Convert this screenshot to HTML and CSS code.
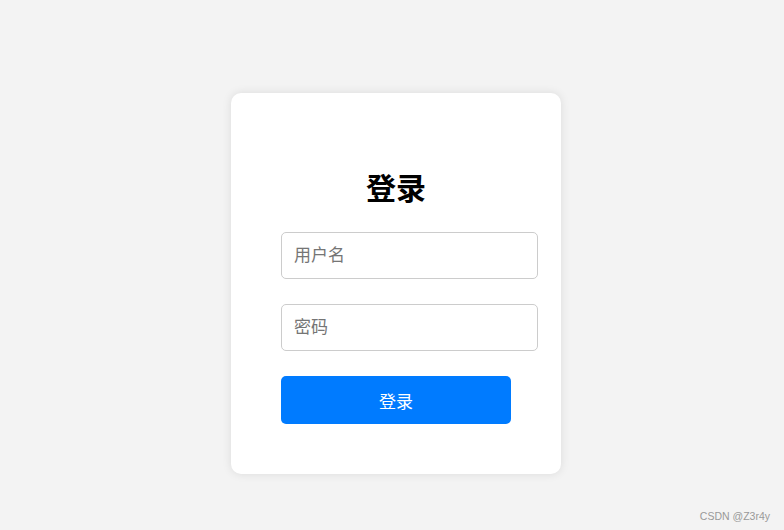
FILE: index.html
```html
<!DOCTYPE html>
<html lang="zh-CN">
<head>
<meta charset="utf-8">
<title>登录</title>
<link rel="stylesheet" href="styles.css">
</head>
<body>
<div class="page">
  <form class="card">
    <h1 class="title">登录</h1>
    <input class="field" type="text" placeholder="用户名">
    <input class="field" type="password" placeholder="密码">
    <button class="btn" type="button">登录</button>
  </form>
</div>
<div class="mark">CSDN @Z3r4y</div>
</body>
</html>
```
FILE: styles.css
```css
html, body {
  margin: 0;
  padding: 0;
  background: #f3f3f3;
  font-family: "Liberation Sans", "Noto Sans CJK SC", sans-serif;
  height: 100%;
  overflow: hidden;
}
.page {
  display: flex;
  justify-content: center;
  align-items: flex-start;
  padding: 93px 0 0 8px;
}
.card {
  width: 230px;
  padding: 50px;
  background: #fff;
  border-radius: 10px;
  box-shadow: 0 0 10px rgba(0, 0, 0, 0.1);
  display: flex;
  flex-direction: column;
}
.title {
  height: 46px;
  margin: 23px 0 20px;
  text-align: center;
  font-size: 30px;
  font-weight: bold;
  line-height: 46px;
  color: #000;
}
.field {
  box-sizing: border-box;
  width: 257px;
  height: 47px;
  padding: 0 12px;
  margin: 0 0 25px;
  border: 1px solid #ccc;
  border-radius: 5px;
  font-family: "Liberation Sans", "Noto Sans CJK SC", sans-serif;
  font-size: 17px;
  outline: none;
}
.field::placeholder {
  color: #757575;
}
.btn {
  box-sizing: border-box;
  width: 230px;
  height: 48px;
  border: none;
  border-radius: 5px;
  background: #007bff;
  color: #fff;
  font-family: "Liberation Sans", "Noto Sans CJK SC", sans-serif;
  font-size: 17px;
  cursor: pointer;
}
.mark {
  position: absolute;
  right: 14px;
  bottom: 8px;
  font-size: 10.5px;
  color: #999;
}
```
